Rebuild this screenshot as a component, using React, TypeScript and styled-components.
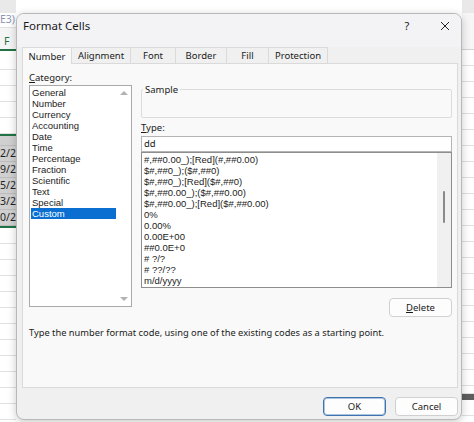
import styled, { createGlobalStyle } from 'styled-components';

const GlobalStyle = createGlobalStyle`
  html, body {
    margin: 0;
    padding: 0;
  }
  body {
    font-family: "Noto Sans", "Open Sans", "Liberation Sans", sans-serif;
    color: #1b1b1b;
    -webkit-font-smoothing: antialiased;
  }
`;

const Screen = styled.div`
  display: flex;
  width: 474px;
  height: 422px;
  overflow: hidden;
  background: #ffffff;
`;

// ---- spreadsheet showing behind the dialog ----
const SheetStrip = styled.div<{ $w: number }>`
  width: ${(p) => p.$w}px;
  flex: none;
  display: flex;
  flex-direction: column;
  background: #ffffff;
  font-size: 10.5px;
  line-height: 16px;
  overflow: hidden;
`;

const TopBand = styled.div`
  height: 13px;
  flex: none;
  background: #e9e9e9;
`;

const FormulaRow = styled.div`
  height: 14px;
  flex: none;
  border-bottom: 1px solid #e2e2e2;
  color: #8c95b4;
  line-height: 13px;
  white-space: nowrap;
`;

const ColHeader = styled.div<{ $active?: boolean; $h?: number }>`
  height: ${(p) => p.$h ?? 21}px;
  flex: none;
  display: flex;
  align-items: flex-end;
  padding-left: 4px;
  background: #f5f5f5;
  color: #217346;
  line-height: 16px;
  border-bottom: ${(p) => (p.$active ? '2px solid #217346' : '1px solid #d4d4d4')};
`;

const Cell = styled.div<{ $sel?: boolean; $h?: number }>`
  height: ${(p) => p.$h ?? 16}px;
  flex: none;
  box-sizing: border-box;
  border-bottom: 1px solid ${(p) => (p.$sel ? '#bdbdbd' : '#e1e1e1')};
  background: ${(p) => (p.$sel ? '#d0d0d0' : '#ffffff')};
  color: #1f1f1f;
  white-space: nowrap;
  display: flex;
  justify-content: flex-end;
  line-height: 15px;
`;

const SelectedBlock = styled.div`
  flex: none;
  display: flex;
  flex-direction: column;
  border-top: 2px solid #217346;
  border-bottom: 2px solid #217346;
`;

const StatusBlock = styled.div`
  height: 6px;
  flex: none;
  background: #5e5e5e;
`;

// ---- dialog window ----
const Window = styled.div`
  margin-top: 13px;
  width: 446px;
  height: 407px;
  flex: none;
  box-sizing: border-box;
  border: 1px solid #b8b8b8;
  border-radius: 8px;
  background: #f0f0f0;
  box-shadow: 0 2px 8px rgba(0, 0, 0, 0.22);
  display: flex;
  flex-direction: column;
  overflow: hidden;
  position: relative;
  z-index: 1;
`;

const TitleBar = styled.div`
  height: 33px;
  box-sizing: border-box;
  flex: none;
  display: flex;
  align-items: flex-start;
  padding: 5px 0 0 6px;
  background: #f3f3f6;
  font-size: 11.5px;
  line-height: 14px;
`;

const Title = styled.span`
  flex: 1;
`;

const TitleButton = styled.span<{ $w: number; $gap?: number }>`
  width: ${(p) => p.$w}px;
  height: 14px;
  margin-right: ${(p) => p.$gap ?? 0}px;
  display: flex;
  justify-content: center;
  align-items: center;
  font-size: 11px;
  color: #202020;
`;

const Body = styled.div`
  flex: 1;
  display: flex;
  flex-direction: column;
  padding: 0 3px 0 5px;
`;

const TabStrip = styled.div`
  display: flex;
  height: 16px;
  flex: none;
  position: relative;
  z-index: 1;
`;

const Tab = styled.div<{ $w: number; $active?: boolean }>`
  width: ${(p) => p.$w}px;
  box-sizing: border-box;
  height: ${(p) => (p.$active ? 17 : 16)}px;
  display: flex;
  align-items: center;
  justify-content: center;
  font-size: 9.5px;
  color: #1b1b1b;
  border-top: 1px solid #dadada;
  border-right: 1px solid #dadada;
  ${(p) => (p.$active ? 'border-left: 1px solid #dadada;' : '')}
  background: ${(p) => (p.$active ? '#f9f9f9' : '#f0f0f0')};
`;

const Panel = styled.div`
  height: 325px;
  box-sizing: border-box;
  flex: none;
  border: 1px solid #dadada;
  background: #f9f9f9;
  padding: 8px 5px 0 6px;
  display: flex;
  flex-direction: column;
  font-size: 9.5px;
  line-height: 11px;
`;

const Columns = styled.div`
  display: grid;
  grid-template-columns: 103px 311px;
  column-gap: 9px;
`;

const Column = styled.div<{ $top?: number }>`
  display: flex;
  flex-direction: column;
  padding-top: ${(p) => p.$top ?? 0}px;
`;

const Label = styled.div<{ $gap?: number }>`
  height: 12px;
  margin-top: ${(p) => p.$gap ?? 0}px;
  line-height: 12px;
`;

const Key = styled.span`
  text-decoration: underline;
  text-underline-offset: 1px;
`;

const ListBox = styled.div<{ $h: number; $dark?: boolean; $gap?: number }>`
  height: ${(p) => p.$h}px;
  margin-top: ${(p) => p.$gap ?? 0}px;
  box-sizing: border-box;
  border: 1px solid ${(p) => (p.$dark ? '#8e8e8e' : '#a9a9a9')};
  background: #ffffff;
  display: flex;
`;

const Items = styled.div`
  flex: 1;
  padding: 1px 1px 0;
  overflow: hidden;
`;

const Item = styled.div<{ $selected?: boolean }>`
  height: 11px;
  line-height: 11px;
  padding-left: 1px;
  white-space: nowrap;
  font-family: "Liberation Sans", Arial, sans-serif;
  font-size: 9.5px;
  background: ${(p) => (p.$selected ? '#0a6fd1' : 'transparent')};
  color: ${(p) => (p.$selected ? '#ffffff' : '#1b1b1b')};
`;

const ScrollTrack = styled.div<{ $fill?: boolean }>`
  width: 14px;
  flex: none;
  background: ${(p) => (p.$fill ? '#f0f0f0' : '#ffffff')};
  display: flex;
  flex-direction: column;
  justify-content: ${(p) => (p.$fill ? 'flex-start' : 'space-between')};
  align-items: center;
  padding: 5px 0;
  box-sizing: border-box;
`;

const Thumb = styled.div<{ $offset: number; $len: number }>`
  width: 2px;
  height: ${(p) => p.$len}px;
  margin-top: ${(p) => p.$offset}px;
  border-radius: 1px;
  background: #8a8a8a;
`;

const Arrow = styled.div<{ $up?: boolean }>`
  width: 0;
  height: 0;
  border-left: 4px solid transparent;
  border-right: 4px solid transparent;
  ${(p) => (p.$up ? 'border-bottom' : 'border-top')}: 4px solid #b2b2b2;
`;

const SampleBox = styled.fieldset`
  margin: 0;
  padding: 0;
  min-width: 0;
  height: 34px;
  box-sizing: border-box;
  border: 1px solid #dcdcdc;
  border-radius: 2px;
`;

const Legend = styled.legend`
  margin-left: 1px;
  padding: 0 2px;
  line-height: 11px;
`;

const TypeInput = styled.div`
  height: 16px;
  box-sizing: border-box;
  margin-top: 2px;
  border: 1px solid #b4b4b4;
  background: #ffffff;
  padding-left: 2px;
  line-height: 14px;
`;

const ButtonRow = styled.div<{ $gap?: number }>`
  display: flex;
  justify-content: flex-end;
  gap: 9px;
  margin-top: ${(p) => p.$gap ?? 0}px;
`;

const Button = styled.button<{ $primary?: boolean }>`
  width: 63px;
  height: 19px;
  box-sizing: border-box;
  padding: 0;
  border-radius: 4px;
  font-family: inherit;
  font-size: 9.5px;
  color: #1b1b1b;
  background: #fdfdfd;
  border: 1px solid ${(p) => (p.$primary ? '#3f73ad' : '#d0d0d0')};
  box-shadow: ${(p) => (p.$primary ? 'inset 0 0 0 1px #aac4e2' : 'none')};
`;

const Hint = styled.div`
  margin-top: 10px;
  height: 11px;
  line-height: 11px;
  font-size: 9.3px;
`;

const Footer = styled.div`
  padding-top: 9px;
`;

const categories = [
  'General', 'Number', 'Currency', 'Accounting', 'Date', 'Time',
  'Percentage', 'Fraction', 'Scientific', 'Text', 'Special', 'Custom',
];

const formats = [
  '#,##0.00_);[Red](#,##0.00)',
  '$#,##0_);($#,##0)',
  '$#,##0_);[Red]($#,##0)',
  '$#,##0.00_);($#,##0.00)',
  '$#,##0.00_);[Red]($#,##0.00)',
  '0%',
  '0.00%',
  '0.00E+00',
  '##0.0E+0',
  '# ?/?',
  '# ??/??',
  'm/d/yyyy',
];

const tabs: [string, number][] = [
  ['Number', 50], ['Alignment', 59], ['Font', 45],
  ['Border', 51], ['Fill', 42], ['Protection', 59],
];

const dates = ['2/2', '9/2', '5/2', '3/2', '0/2'];

const CloseIcon = () => (
  <svg width="10" height="10" viewBox="0 0 10 10">
    <path d="M1 1 L9 9 M9 1 L1 9" stroke="#222" strokeWidth="1" fill="none" />
  </svg>
);

const App = () => {
  return (
    <>
      <GlobalStyle />
      <Screen>
        <SheetStrip $w={16}>
          <TopBand />
          <FormulaRow>E3)</FormulaRow>
          <ColHeader $active>F</ColHeader>
          <Cell $h={19} />
          {[0, 1, 2, 3].map((i) => (
            <Cell key={i} />
          ))}
          <SelectedBlock>
            <Cell $sel $h={10} />
            {dates.map((d) => (
              <Cell key={d} $sel>{d}</Cell>
            ))}
          </SelectedBlock>
          {Array.from({ length: 12 }, (_, i) => (
            <Cell key={i} />
          ))}
        </SheetStrip>

        <Window>
          <TitleBar>
            <Title>Format Cells</Title>
            <TitleButton $w={22} $gap={11}>?</TitleButton>
            <TitleButton $w={32}>
              <CloseIcon />
            </TitleButton>
          </TitleBar>
          <Body>
            <TabStrip>
              {tabs.map(([name, w], i) => (
                <Tab key={name} $w={w} $active={i === 0}>
                  {name}
                </Tab>
              ))}
            </TabStrip>
            <Panel>
              <Columns>
                <Column>
                  <Label>
                    <Key>C</Key>ategory:
                  </Label>
                  <ListBox $h={222} $gap={1}>
                    <Items>
                      {categories.map((c) => (
                        <Item key={c} $selected={c === 'Custom'}>
                          {c}
                        </Item>
                      ))}
                    </Items>
                    <ScrollTrack>
                      <Arrow $up />
                      <Arrow />
                    </ScrollTrack>
                  </ListBox>
                </Column>
                <Column $top={12}>
                  <SampleBox>
                    <Legend>Sample</Legend>
                  </SampleBox>
                  <Label $gap={4}>
                    <Key>T</Key>ype:
                  </Label>
                  <TypeInput>dd</TypeInput>
                  <ListBox $h={136} $dark>
                    <Items>
                      {formats.map((f) => (
                        <Item key={f}>{f}</Item>
                      ))}
                    </Items>
                    <ScrollTrack $fill>
                      <Thumb $offset={33} $len={32} />
                    </ScrollTrack>
                  </ListBox>
                  <ButtonRow $gap={10}>
                    <Button>
                      <Key>D</Key>elete
                    </Button>
                  </ButtonRow>
                </Column>
              </Columns>
              <Hint>Type the number format code, using one of the existing codes as a starting point.</Hint>
            </Panel>
            <Footer>
              <ButtonRow>
                <Button $primary>OK</Button>
                <Button>Cancel</Button>
              </ButtonRow>
            </Footer>
          </Body>
        </Window>

        <SheetStrip $w={12}>
          <TopBand />
          <ColHeader $h={36} style={{ background: '#f6f6f6' }} />
          {Array.from({ length: 21 }, (_, i) => (
            <Cell key={i} />
          ))}
          <Cell $h={8} />
          <StatusBlock />
          <Cell />
        </SheetStrip>
      </Screen>
    </>
  );
};

export default App;
